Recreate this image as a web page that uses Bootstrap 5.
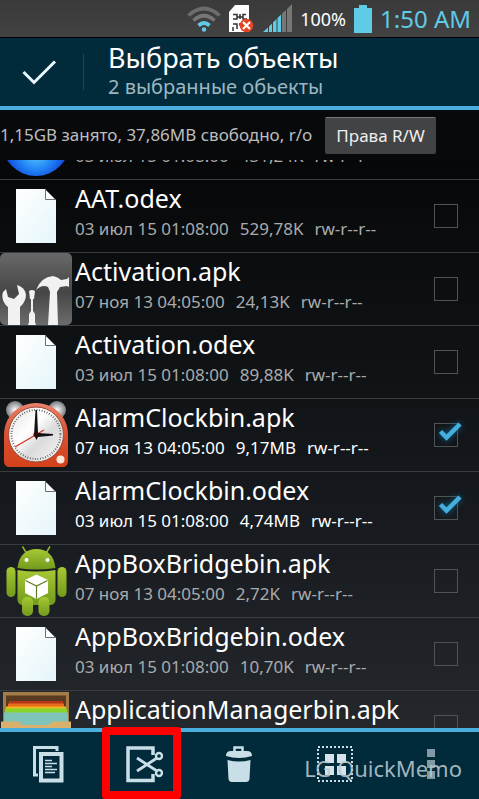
<!DOCTYPE html>
<html lang="ru">
<head>
<meta charset="utf-8">
<meta name="viewport" content="width=device-width, initial-scale=1">
<title>Выбрать объекты</title>
<link rel="stylesheet" href="https://cdn.jsdelivr.net/npm/bootstrap@5.3.0/dist/css/bootstrap.min.css">
<style>
body { font-family: "Noto Sans", "Open Sans", sans-serif; background: #07090a; color: #fff; }
svg { display: block; flex: none; }
.status-bar { height: 37px; background: linear-gradient(#3a3a3a, #424242); padding-right: 8px; font-size: 18px; line-height: 24px; }
.status-clock { font-size: 24px; color: #5fcbe4; }
.title-bar { background: #012b3b; border-top: 1px solid #000; border-bottom: 4px solid #4aaede; height: 73px; }
.done-btn { width: 84px; border: 0; border-right: 1px solid #1c4756; background: none; padding: 0 0 0 22px; height: 36px; }
.title-text { font-size: 27px; line-height: 30px; font-weight: 400; }
.title-sub { font-size: 20px; line-height: 28px; color: #9db6c0; }
.storage-bar { height: 50px; font-size: 17px; color: #bdbdbd; gap: 13px; }
.rights-btn { background: #424344; color: #eee; border: 0; border-top: 1px solid #77797a; border-radius: 2px; font-size: 17px; line-height: 24px; padding: 6px 11px; }
.file-list { background: linear-gradient(#060708, #0d1012 25%, #16191d 60%, #24282d); min-height: 0; }
.file-rows { margin-top: -53px; }
.file-row { border-bottom: 1px solid #3a3d3f; padding-right: 21px; height: 73px; gap: 3px; }
.file-name { font-size: 25px; line-height: 32px; padding-top: 2px; }
.file-meta { font-size: 17px; line-height: 24px; padding-top: 3px; color: #a9abad; gap: 11px; white-space: nowrap; }
.is-picked .file-meta { color: #fff; }
.pick { appearance: none; position: relative; width: 24px; height: 24px; border: 1px solid #505356; margin: 0; background: transparent; flex: none; }
.pick:checked::after { content: ""; position: absolute; left: 2px; top: -4px; width: 28px; height: 24px; filter: drop-shadow(0 0 3px #0a6b93);
  background: url("data:image/svg+xml,%3Csvg xmlns='http://www.w3.org/2000/svg' viewBox='0 0 28 24'%3E%3Cpath d='M3.500 11.500L9.500 17.500L23 4' fill='none' stroke='%2345afdf' stroke-width='4.500'/%3E%3C/svg%3E"); }
.tool-bar { height: 71px; background: #012b3b; border-top: 4px solid #4aaede; }
.tool-btn { flex: 1 1 0; border: 0; background: none; padding: 0 0 4px; }
.cut-frame { position: absolute; inset: -5px 11px 0 6px; border: 8px solid #f00; border-radius: 3px; }
.memo-tip { position: absolute; right: 17px; bottom: 17px; font-size: 22px; line-height: 28px; color: rgba(187, 201, 208, .88); pointer-events: none; }
</style>
<script src="https://cdn.jsdelivr.net/npm/bootstrap@5.3.0/dist/js/bootstrap.bundle.min.js"></script>
</head>
<body class="vh-100 d-flex flex-column overflow-hidden">
<svg width="0" height="0" class="position-absolute" aria-hidden="true">
  <defs>
    <linearGradient id="paper" x1="0" y1="0" x2="1" y2="1"><stop offset="0" stop-color="#fff"/><stop offset="1" stop-color="#e4f5fa"/></linearGradient>
    <linearGradient id="steel" x1="0" y1="0" x2="0" y2="1"><stop offset="0" stop-color="#686868"/><stop offset=".55" stop-color="#464646"/><stop offset="1" stop-color="#6c6c6c"/></linearGradient>
    <linearGradient id="orange" x1="0" y1="0" x2="0" y2="1"><stop offset="0" stop-color="#e8816b"/><stop offset=".5" stop-color="#d9502f"/><stop offset="1" stop-color="#d3411c"/></linearGradient>
    <linearGradient id="green" x1="0" y1="0" x2="0" y2="1"><stop offset="0" stop-color="#a6c834"/><stop offset="1" stop-color="#729a1c"/></linearGradient>
    <radialGradient id="globe" cx=".5" cy=".65" r=".5"><stop offset="0" stop-color="#5fd0ff"/><stop offset=".5" stop-color="#2388f5"/><stop offset="1" stop-color="#0c35d6"/></radialGradient>
    <radialGradient id="bell"><stop offset="0" stop-color="#fff"/><stop offset="1" stop-color="#777b7e"/></radialGradient>
    <linearGradient id="dial" x1="0" y1="0" x2="1" y2="1"><stop offset="0" stop-color="#e2e2e2"/><stop offset=".4" stop-color="#fff"/><stop offset=".6" stop-color="#dadada"/><stop offset="1" stop-color="#fafafa"/></linearGradient>
    <symbol id="doc" viewBox="0 0 72 72"><path d="M16 9H45L56 20V63H16Z" fill="url(#paper)"/><path d="M45.500 9.500V19.500H55.500Z" fill="#fff" stroke="#6a7073" stroke-width="1"/></symbol>
  </defs>
</svg>

<div class="status-bar d-flex gap-2 align-items-center justify-content-end flex-shrink-0">
  <svg width="34" height="26" viewBox="0 0 34 26" fill="none"><path d="M1.500 9.500Q17-4.500 32.500 9.500" stroke="#6c6c6c" stroke-width="3.600"/><path d="M6.500 14.500Q17 5 27.500 14.500" stroke="#767676" stroke-width="3.600"/><path d="M11.500 19.500Q17 14.500 22.500 19.500" stroke="#5fcbe4" stroke-width="3.800"/><circle cx="17" cy="23.500" r="2.200" fill="#5fcbe4"/></svg>
  <svg width="25" height="28" viewBox="0 0 25 28"><path d="M6 0H20V27H0V7Z" fill="#fff"/><g fill="none" stroke="#333" stroke-width="1.500"><path d="M4 9.500H8V14H4M11 9V14M8 12H14M17 9.500H14V14H18M4 19H8V24M4 22V26M11 18V20H15"/></g><circle cx="17.500" cy="20.500" r="6.800" fill="#e2451f"/><path d="M14 17L21 24M21 17L14 24" stroke="#fff" stroke-width="2.200"/></svg>
  <svg width="30" height="29" viewBox="0 0 30 29"><path d="M1 28L6 23.500V28ZM7 22.500L10 19.500V28H7ZM11 18.500L14.500 15V28H11ZM15.500 14L19 10.500V28H15.500Z" fill="#5fcbe4"/><path d="M20 9.500L24 6V28H20ZM25 5L30 0V28H25Z" fill="#777"/></svg>
  <span>100%</span>
  <svg width="18" height="28" viewBox="0 0 18 28"><path d="M5 0H13V3H18V28H0V3H5Z" fill="#5fcbe4"/></svg>
  <span class="status-clock">1:50 AM</span>
</div>

<header class="title-bar d-flex align-items-center flex-shrink-0">
  <button class="done-btn" type="button" aria-label="Готово"><svg width="36" height="28" viewBox="0 0 36 28"><path d="M1.500 14L12 24.500L33 3.500" fill="none" stroke="#eaf8fd" stroke-width="3"/></svg></button>
  <div class="ps-4">
    <h1 class="title-text mb-0">Выбрать объекты</h1>
    <div class="title-sub">2 выбранные обьекты</div>
  </div>
</header>

<div class="storage-bar d-flex align-items-center flex-shrink-0">
  <span class="text-nowrap">1,15GB занято, 37,86MB свободно, r/o</span>
  <button class="rights-btn text-nowrap" type="button">Права R/W</button>
</div>

<main class="file-list flex-grow-1 overflow-hidden">
  <div class="file-rows">
    <div class="file-row d-flex">
      <svg width="72" height="72" viewBox="0 0 72 72"><circle cx="36" cy="35" r="34" fill="url(#globe)"/></svg>
      <div class="flex-grow-1"><div class="file-name">&nbsp;</div><div class="file-meta d-flex"><span>03 июл 15 01:08:00</span><span>431,24K</span><span>rw-r--r--</span></div></div>
    </div>
    <label class="file-row d-flex align-items-start">
      <svg width="72" height="72"><use href="#doc"/></svg>
      <span class="flex-grow-1"><span class="file-name d-block">AAT.odex</span><span class="file-meta d-flex"><span>03 июл 15 01:08:00</span><span>529,78K</span><span>rw-r--r--</span></span></span>
      <input class="pick align-self-center" type="checkbox">
    </label>
    <label class="file-row d-flex align-items-start">
      <svg width="72" height="72" viewBox="0 0 72 72"><rect width="72" height="72" rx="5" fill="url(#steel)"/><g fill="#f1f1f1"><path d="M8 72V54C4 51 1 45 3 39L6 36L8 44L14 46L19 41L17 32C24 34 28 40 25 47Q23 52 20 54V72Z"/><path d="M29 38Q32 36 35 38L34 46H33V58L35 61V69L36 72H28L29 69V61L31 58V46H30Z"/><path d="M36 37Q41 24 53 23Q58 24 61 27L67 26L69 24V34L67 33L60 34L57 39L58 72H48L50 39L48 34Q42 31 36 37Z"/></g></svg>
      <span class="flex-grow-1"><span class="file-name d-block">Activation.apk</span><span class="file-meta d-flex"><span>07 ноя 13 04:05:00</span><span>24,13K</span><span>rw-r--r--</span></span></span>
      <input class="pick align-self-center" type="checkbox">
    </label>
    <label class="file-row d-flex align-items-start">
      <svg width="72" height="72"><use href="#doc"/></svg>
      <span class="flex-grow-1"><span class="file-name d-block">Activation.odex</span><span class="file-meta d-flex"><span>03 июл 15 01:08:00</span><span>89,88K</span><span>rw-r--r--</span></span></span>
      <input class="pick align-self-center" type="checkbox">
    </label>
    <label class="file-row is-picked d-flex align-items-start">
      <svg width="72" height="72" viewBox="0 0 72 72"><circle cx="15" cy="11" r="9" fill="url(#bell)"/><circle cx="57" cy="11" r="9" fill="url(#bell)"/><path d="M4 36C4 18 18 4 36 4S68 18 68 36V62Q68 68 62 68H10Q4 68 4 62Z" fill="url(#orange)"/><circle cx="36" cy="35.500" r="27.500" fill="url(#dial)" stroke="#9b4936" stroke-width="1"/><circle cx="36" cy="35.500" r="24.500" fill="none" stroke="#444" stroke-width="2" stroke-dasharray="0.700 1.866"/><path d="M15 48L44 31" stroke="#d1301f" stroke-width="1.200"/><path d="M35.500 11H37L38 34L53 35V36.500L38 38L36.500 41L34 36Z" fill="#111"/><circle cx="36" cy="35.500" r="2.500" fill="#320d09"/><circle cx="60.500" cy="60.500" r="4" fill="#ffe4da"/></svg>
      <span class="flex-grow-1"><span class="file-name d-block">AlarmClockbin.apk</span><span class="file-meta d-flex"><span>07 ноя 13 04:05:00</span><span>9,17MB</span><span>rw-r--r--</span></span></span>
      <input class="pick align-self-center" type="checkbox" checked>
    </label>
    <label class="file-row is-picked d-flex align-items-start">
      <svg width="72" height="72"><use href="#doc"/></svg>
      <span class="flex-grow-1"><span class="file-name d-block">AlarmClockbin.odex</span><span class="file-meta d-flex"><span>03 июл 15 01:08:00</span><span>4,74MB</span><span>rw-r--r--</span></span></span>
      <input class="pick align-self-center" type="checkbox" checked>
    </label>
    <label class="file-row d-flex align-items-start">
      <svg width="72" height="72" viewBox="0 0 72 72"><path d="M22.500 1.500L27 9M50 1.500L45.500 9" stroke="#93b52c" stroke-width="1.500"/><g fill="url(#green)"><path d="M17.500 23C19 10 26 4 36.500 4S54 10 55.500 23Q36.500 26 17.500 23Z"/><path d="M17.500 25Q36 28 55.500 25V55Q55 60 50 60H23Q18 60 17.500 55Z"/><rect x="6.500" y="22" width="9" height="30" rx="4.500"/><rect x="57.500" y="22" width="9" height="30" rx="4.500"/><rect x="22" y="52" width="11" height="19" rx="5"/><rect x="38.500" y="52" width="11" height="19" rx="5"/></g><circle cx="26.500" cy="15" r="2" fill="#fff"/><circle cx="47.500" cy="15" r="2" fill="#fff"/><path d="M36.500 29.500L48 35V48L36.500 54L25 48V35Z" fill="#fff"/><path d="M25.500 35.500L36.500 41L47.500 35.500M36.500 41V53.500" fill="none" stroke="#5d7d1a" stroke-width="1.200"/></svg>
      <span class="flex-grow-1"><span class="file-name d-block">AppBoxBridgebin.apk</span><span class="file-meta d-flex"><span>07 ноя 13 04:05:00</span><span>2,72K</span><span>rw-r--r--</span></span></span>
      <input class="pick align-self-center" type="checkbox">
    </label>
    <label class="file-row d-flex align-items-start">
      <svg width="72" height="72"><use href="#doc"/></svg>
      <span class="flex-grow-1"><span class="file-name d-block">AppBoxBridgebin.odex</span><span class="file-meta d-flex"><span>03 июл 15 01:08:00</span><span>10,70K</span><span>rw-r--r--</span></span></span>
      <input class="pick align-self-center" type="checkbox">
    </label>
    <label class="file-row d-flex align-items-start">
      <svg width="72" height="72" viewBox="0 0 72 72"><rect x="3" y="1" width="66" height="34" fill="#a37c49"/><rect x="6" y="4.500" width="60" height="28" fill="#5b3b20"/><path d="M9 10H63V15H9Z" fill="#b4371c"/><path d="M8 12.500H64V18H8Z" fill="#e96c1c"/><path d="M6 15.500H66V22H6Z" fill="#f2b71e"/><path d="M5 17.500H67V24H5Z" fill="#87d42b"/><path d="M4 21.500H68V34H4Z" fill="#7fc4b9"/><path d="M1 30.500H18L23 34H48L53 30.500H71V68H1Z" fill="#d9b06c"/></svg>
      <span class="flex-grow-1"><span class="file-name d-block">ApplicationManagerbin.apk</span></span>
      <input class="pick align-self-center" type="checkbox">
    </label>
  </div>
</main>

<footer class="tool-bar d-flex align-items-stretch position-relative flex-shrink-0">
  <button class="tool-btn d-flex align-items-center justify-content-center" type="button" aria-label="Копировать"><svg width="32" height="38" viewBox="0 0 32 38" fill="none" stroke="#c9dfe7"><path d="M25 6V2.500H2.500V30H6" stroke-width="3"/><path d="M9 9H29.500V35.500H9Z" stroke-width="4"/><path d="M13 15.500H20M13 18.500H25M13 21.500H20M13 24.500H25M13 27.500H23" stroke-width="1.400"/></svg></button>
  <button class="tool-btn d-flex align-items-center justify-content-center position-relative" type="button" aria-label="Вырезать"><svg width="38" height="38" viewBox="0 0 38 38" fill="none" stroke="#c9dfe7"><path d="M28 10V3H3V35.500H28V29" stroke-width="3.500"/><path d="M12 13L32 26M12 26L32 13" stroke-width="2.800"/><circle cx="34" cy="11" r="3" stroke-width="2.400"/><circle cx="34" cy="28" r="3" stroke-width="2.400"/></svg><span class="cut-frame"></span></button>
  <button class="tool-btn d-flex align-items-center justify-content-center" type="button" aria-label="Удалить"><svg width="26" height="38" viewBox="0 0 26 38"><path d="M8.500 6V2.500H16.500V6" fill="none" stroke="#c9dfe7" stroke-width="2.500"/><path d="M0 11Q0 6 5 6H21Q26 6 26 11Q13 15 0 11ZM1.500 15Q13 18 24.500 15L23.500 34Q23 37 20 37H6Q3 37 2.500 34Z" fill="#c9dfe7"/></svg></button>
  <button class="tool-btn d-flex align-items-center justify-content-center" type="button" aria-label="Выделить все"><svg width="38" height="38" viewBox="0 0 38 38"><rect x="2" y="2" width="34" height="34" fill="none" stroke="#c9dfe7" stroke-width="2" stroke-dasharray="2 2"/><path d="M9 9H18V18H9ZM21 9H30V18H21ZM9 21H18V30H9ZM21 21H30V30H21Z" fill="#d5e4ea"/></svg></button>
  <button class="tool-btn d-flex align-items-center justify-content-center" type="button" aria-label="Меню"><svg width="8" height="32" viewBox="0 0 8 32"><path d="M0 1H8V9H0ZM0 12H8V20H0ZM0 23H8V31H0Z" fill="#7f9ba6"/></svg></button>
  <span class="memo-tip">LG QuickMemo</span>
</footer>
</body>
</html>
